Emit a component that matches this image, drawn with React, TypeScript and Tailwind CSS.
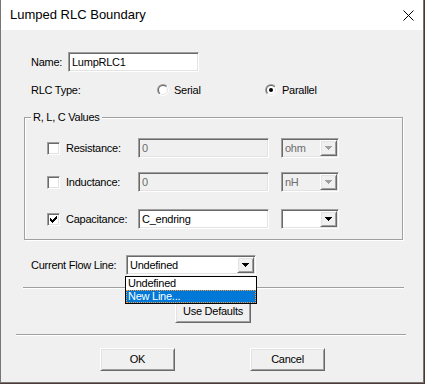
import React from 'react'

const sunken =
  'border border-t-[#a0a0a0] border-l-[#a0a0a0] border-b-white border-r-white shadow-[inset_1px_1px_0_#696969,inset_-1px_-1px_0_#e3e3e3]'
const raised =
  'border border-t-white border-l-white border-b-[#696969] border-r-[#696969] shadow-[inset_1px_1px_0_#e3e3e3,inset_-1px_-1px_0_#a0a0a0]'

function DownArrow({ disabled }: { disabled?: boolean }) {
  const c = disabled ? '#a0a0a0' : '#000'
  return (
    <svg width="7" height="4" viewBox="0 0 7 4" shapeRendering="crispEdges">
      <rect x="0" y="0" width="7" height="1" fill={c} />
      <rect x="1" y="1" width="5" height="1" fill={c} />
      <rect x="2" y="2" width="3" height="1" fill={c} />
      <rect x="3" y="3" width="1" height="1" fill={c} />
    </svg>
  )
}

function Combo({ value, className, disabled, children }: { value: string; className: string; disabled?: boolean; children?: React.ReactNode }) {
  return (
    <div className={`${sunken} ${className} relative h-[20px] flex p-[1px] ${disabled ? 'bg-[#f0f0f0] text-[#6d6d6d]' : 'bg-white text-black'}`}>
      <div className="flex-1 flex items-center pl-[2px] leading-none">{value}</div>
      <div className={`${raised} w-[17px] h-full bg-[#f0f0f0] flex items-center justify-center`}>
        <DownArrow disabled={disabled} />
      </div>
      {children}
    </div>
  )
}

function Field({ value, className, disabled }: { value: string; className: string; disabled?: boolean }) {
  return (
    <div className={`${sunken} ${className} h-[20px] flex items-center pl-[3px] leading-none ${disabled ? 'bg-[#f0f0f0] text-[#6d6d6d]' : 'bg-white text-black'}`}>
      {value}
    </div>
  )
}

function CheckBox({ checked }: { checked?: boolean }) {
  return (
    <div className={`${sunken} w-[13px] h-[13px] bg-white flex items-center justify-center shrink-0`}>
      {checked && (
        <svg width="7" height="7" viewBox="0 0 7 7" shapeRendering="crispEdges">
          <rect x="0" y="2" width="1" height="3" fill="#000" />
          <rect x="1" y="3" width="1" height="3" fill="#000" />
          <rect x="2" y="4" width="1" height="3" fill="#000" />
          <rect x="3" y="3" width="1" height="3" fill="#000" />
          <rect x="4" y="2" width="1" height="3" fill="#000" />
          <rect x="5" y="1" width="1" height="3" fill="#000" />
          <rect x="6" y="0" width="1" height="3" fill="#000" />
        </svg>
      )}
    </div>
  )
}

function Radio({ checked }: { checked?: boolean }) {
  return (
    <svg width="12" height="12" viewBox="0 0 12 12" className="shrink-0">
      <defs>
        <linearGradient id="rOuter" x1="0" y1="0" x2="1" y2="1">
          <stop offset="0.5" stopColor="#a0a0a0" />
          <stop offset="0.5" stopColor="#ffffff" />
        </linearGradient>
        <linearGradient id="rInner" x1="0" y1="0" x2="1" y2="1">
          <stop offset="0.5" stopColor="#696969" />
          <stop offset="0.5" stopColor="#e3e3e3" />
        </linearGradient>
      </defs>
      <circle cx="6" cy="6" r="6" fill="url(#rOuter)" />
      <circle cx="6" cy="6" r="5" fill="url(#rInner)" />
      <circle cx="6" cy="6" r="4" fill="#fff" />
      {checked && <circle cx="6" cy="6" r="2" fill="#000" />}
    </svg>
  )
}

function Button({ label, className }: { label: string; className: string }) {
  return (
    <div className={`${raised} ${className} h-[23px] bg-[#f0f0f0] flex items-center justify-center leading-none`}>
      {label}
    </div>
  )
}

function Separator({ className }: { className: string }) {
  return <div className={`${className} h-[2px] border-t border-t-[#a0a0a0] border-b border-b-white`} />
}

function ValueRow({ label, value, unit, checked, disabled, className }: {
  label: string
  value: string
  unit: string
  checked?: boolean
  disabled?: boolean
  className: string
}) {
  return (
    <div className={`flex items-center h-[20px] ${className}`}>
      <CheckBox checked={checked} />
      <span className="ml-[6px] w-[72px]">{label}</span>
      <Field value={value} disabled={disabled} className="w-[131px]" />
      <Combo value={unit} disabled={disabled} className="w-[58px] ml-[12px]" />
    </div>
  )
}

export default function App() {
  return (
    <div className="w-[425px] h-[384px] bg-[#4d3a35] font-['Liberation_Sans',Arial,sans-serif]">
      <div className="w-[424px] h-[383px] flex flex-col border-x border-b border-[#767676] bg-[#f0f0f0]">
        {/* title bar */}
        <div className="h-[30px] bg-white flex items-center justify-between pl-[9px] pr-[9px] shrink-0">
          <span className="text-[13px] text-black">Lumped RLC Boundary</span>
          <svg width="11" height="11" viewBox="0 0 11 11">
            <path d="M0.5 0.5L10.5 10.5M10.5 0.5L0.5 10.5" stroke="#000" strokeWidth="1" />
          </svg>
        </div>

        <div className="flex-1 flex flex-col text-[11px] tracking-[-0.25px] text-black">
          <div className="flex items-center h-[20px] mt-[22px] ml-[30px]">
            <span className="w-[37px]">Name:</span>
            <Field value="LumpRLC1" className="w-[131px]" />
          </div>

          <div className="flex items-center h-[14px] mt-[11px] ml-[30px]">
            <span className="w-[126px]">RLC Type:</span>
            <Radio />
            <span className="ml-[5px] w-[91px]">Serial</span>
            <Radio checked />
            <span className="ml-[5px]">Parallel</span>
          </div>

          <div className="relative mt-[20px] ml-[23px] w-[379px] h-[123px] border border-[#a0a0a0] shadow-[inset_1px_1px_0_#fff,1px_1px_0_#fff] pl-[22px] pt-[20px]">
            <span className="absolute -top-[8px] left-[6px] px-[2px] bg-[#f0f0f0] leading-[14px]">R, L, C Values</span>
            <ValueRow label="Resistance:" value="0" unit="ohm" disabled className="" />
            <ValueRow label="Inductance:" value="0" unit="nH" disabled className="mt-[14px]" />
            <ValueRow label="Capacitance:" value="C_endring" unit="" checked className="mt-[17px]" />
          </div>

          <div className="flex items-center h-[20px] mt-[15px] ml-[30px] relative z-10">
            <span className="w-[95px]">Current Flow Line:</span>
            <Combo value="Undefined" className="w-[130px]">
              <div className="absolute top-[20px] -left-[2px] w-[132px] border border-black bg-white flex flex-col leading-none">
                <div className="h-[13px] flex items-center pl-[2px]">Undefined</div>
                <div className="h-[13px] flex items-center pl-[2px] bg-[#0078d7] text-white outline outline-1 outline-dotted outline-[#ff9a3c] -outline-offset-1">
                  New Line...
                </div>
              </div>
            </Combo>
          </div>

          <Separator className="mt-[12px] ml-[22px] w-[381px]" />

          <Button label="Use Defaults" className="mt-[11px] ml-[174px] w-[76px]" />

          <Separator className="mt-[11px] ml-[15px] w-[390px]" />

          <div className="flex mt-[12px] ml-[99px] gap-[75px]">
            <Button label="OK" className="w-[75px]" />
            <Button label="Cancel" className="w-[75px]" />
          </div>
        </div>
      </div>
    </div>
  )
}
